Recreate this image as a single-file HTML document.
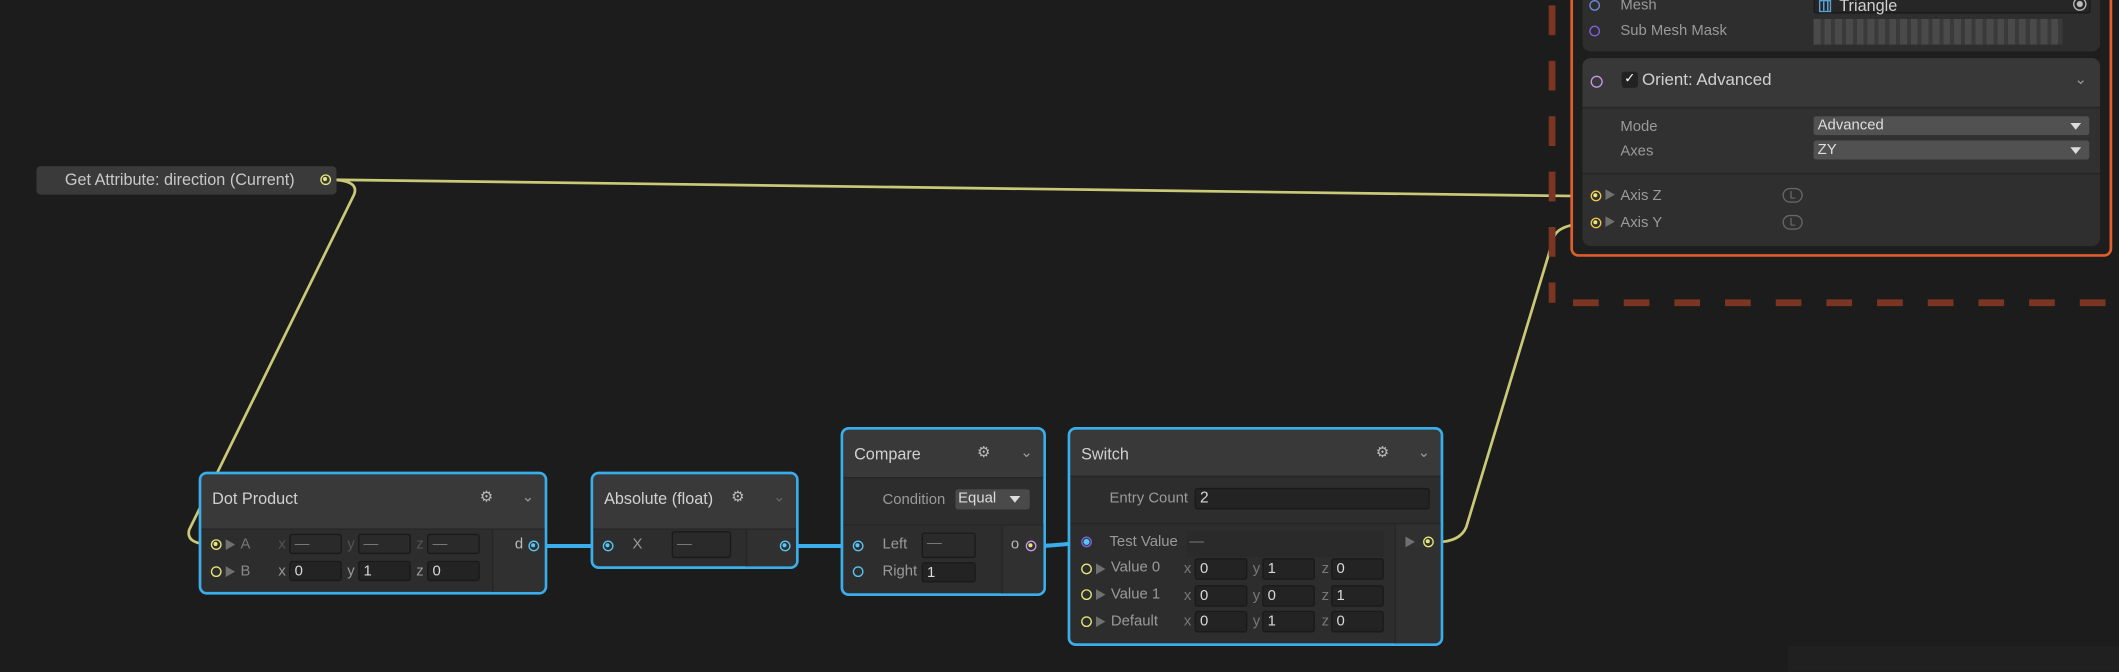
<!DOCTYPE html>
<html><head><meta charset="utf-8"><style>
*{box-sizing:border-box;margin:0;padding:0}
html,body{width:2119px;height:671px;overflow:hidden;background:#1c1c1c}
#s{position:absolute;left:0;top:0;width:1568px;height:497px;transform:scale(1.35140);transform-origin:0 0;font-family:"Liberation Sans",sans-serif;color:#c4c4c4;font-size:11px}
.a{position:absolute}
.node{position:absolute;border:2px solid #3aaeeb;border-radius:6px;background:#2d2d2d;overflow:hidden}
.hd{position:absolute;left:0;right:0;top:0;background:#393939;border-bottom:1px solid #262626}
.t{position:absolute;font-size:12px;color:#d0d0d0;white-space:nowrap}
.l{position:absolute;color:#9a9a9a;white-space:nowrap;font-size:11px}
.f{position:absolute;background:#232323;border:1px solid #1a1a1a;border-radius:2px;color:#d8d8d8;font-size:11px;padding-left:3px;line-height:14px;height:15px}
.fd{color:#777}
.p{position:absolute;width:8px;height:8px;border-radius:50%;border:1.5px solid #e6e67a}
.pb{border-color:#56c6f5}
.pf::after{content:"";position:absolute;left:1px;top:1px;width:3px;height:3px;border-radius:50%;background:#e6e67a}
.pb.pf::after{background:#56c6f5}
.tri{position:absolute;width:0;height:0;border-left:7px solid #707070;border-top:4.5px solid transparent;border-bottom:4.5px solid transparent}
.out{position:absolute;background:#303030;border-left:1px solid #262626}
</style></head><body><div id="s">

<svg class="a" style="left:0;top:0" width="1568" height="497">
<g fill="none" stroke="#c9c978" stroke-width="2">
<path d="M247 133 L1160 145 L1181 145"/>
<path d="M247 133 Q266 134 262 144 L140 392 Q137 403 158 403"/>
<path d="M1060 401 Q1080 402 1085 390 L1150 175 Q1154 165 1181 165"/>
</g>
<g fill="none" stroke="#3aaeeb" stroke-width="3">
<path d="M400 404 L450 404"/><path d="M585 404 L635 404"/><path d="M767 404 Q780 404 803 401"/>
</g>
<g stroke="#7a3622" stroke-width="5" fill="none">
<path d="M1148.5 4 V224" stroke-dasharray="22 19"/>
<path d="M1164 224 H1568" stroke-dasharray="19 18.5"/>
</g>
</svg>

<!-- get attribute -->
<div class="a" style="left:27px;top:123px;width:222px;height:21px;background:#3a3a3a;border-radius:3px"></div>
<div class="t" style="left:48px;top:126px;color:#c8c8c8">Get Attribute: direction (Current)</div>
<div class="p pf" style="left:237px;top:129px"></div>

<!-- orange panel -->
<div class="a" style="left:1162px;top:-10px;width:401px;height:200px;border:2px solid #de5e2c;border-radius:6px;background:#1e1e1e"></div>
<div class="a" style="left:1171px;top:-10px;width:383px;height:48px;background:#2e2e2e;border-radius:6px"></div>
<div class="a" style="left:1176px;top:0px;width:8px;height:8px;border-radius:50%;border:1.5px solid #6f8ad8"></div>
<div class="l" style="left:1199px;top:-2px">Mesh</div>
<div class="f" style="left:1342px;top:-4px;width:205px;height:14px;background:#262626;color:#d0d0d0;padding-left:18px;font-size:12px;line-height:14px">Triangle</div>
<div class="a" style="left:1346px;top:0px;width:9px;height:9px;border:1px solid #5aa0d8;background:repeating-linear-gradient(90deg,transparent 0 2px,#5aa0d8 2px 3px)"></div>
<div class="a" style="left:1534px;top:-2px;width:10px;height:10px;border:1.5px solid #bbb;border-radius:50%;background:radial-gradient(#bbb 0 2px,transparent 2.5px)"></div>
<div class="a" style="left:1176px;top:19px;width:8px;height:8px;border-radius:50%;border:1.5px solid #7d62e0"></div>
<div class="l" style="left:1199px;top:17px">Sub Mesh Mask</div>
<div class="a" style="left:1342px;top:14px;width:184px;height:19px;background:repeating-linear-gradient(90deg,#4a4a4a 0 5px,#3a3a3a 5px 8px)"></div>

<div class="a" style="left:1171px;top:43px;width:383px;height:139px;background:#2f2f2f;border-radius:6px;overflow:hidden">
 <div class="a" style="left:0;top:0;width:383px;height:37px;background:#383838;border-bottom:1px solid #262626"></div>
 <div class="a" style="left:0;top:38px;width:383px;height:48px;background:#313131;border-bottom:1px solid #262626"></div>
</div>
<div class="a" style="left:1177px;top:56px;width:9px;height:9px;border-radius:50%;border:1.5px solid #c49ae6"></div>
<div class="a" style="left:1200px;top:53px;width:12px;height:12px;background:#222;border-radius:2px;color:#fff;font-size:10px;line-height:12px;text-align:center">✓</div>
<div class="t" style="left:1215px;top:52px;font-size:12.5px">Orient: Advanced</div>
<div class="l" style="left:1535px;top:52px;color:#999">⌄</div>
<div class="l" style="left:1199px;top:88px">Mode</div>
<div class="a" style="left:1342px;top:86px;width:204px;height:14px;background:#515151;border-radius:2px;color:#ddd;padding-left:3px;line-height:14px">Advanced</div>
<div class="l" style="left:1199px;top:106px">Axes</div>
<div class="a" style="left:1342px;top:104px;width:204px;height:14px;background:#515151;border-radius:2px;color:#ddd;padding-left:3px;line-height:14px">ZY</div>
<div class="a" style="left:1532px;top:91px;border-top:5px solid #ddd;border-left:4.5px solid transparent;border-right:4.5px solid transparent"></div>
<div class="a" style="left:1532px;top:109px;border-top:5px solid #ddd;border-left:4.5px solid transparent;border-right:4.5px solid transparent"></div>
<div class="p pf" style="left:1177px;top:141px;border-color:#f2c64a"></div>
<div class="p pf" style="left:1177px;top:161px;border-color:#f2c64a"></div>
<div class="tri" style="left:1188px;top:140px"></div><div class="tri" style="left:1188px;top:160px"></div>
<div class="l" style="left:1199px;top:139px">Axis Z</div>
<div class="l" style="left:1199px;top:159px">Axis Y</div>
<div class="a" style="left:1319px;top:139px;width:15px;height:11px;border:1px solid #666;border-radius:6px;color:#777;font-size:8px;text-align:center;line-height:9px">L</div>
<div class="a" style="left:1319px;top:159px;width:15px;height:11px;border:1px solid #666;border-radius:6px;color:#777;font-size:8px;text-align:center;line-height:9px">L</div>

<!-- Dot Product -->
<div class="node" style="left:147px;top:349px;width:258px;height:91px">
 <div class="hd" style="height:41px"></div>
 <div class="out" style="left:215px;top:41px;width:45px;height:50px"></div>
</div>
<div class="t" style="left:157px;top:362px">Dot Product</div>
<div class="l" style="left:355px;top:361px;color:#bbb">⚙</div><div class="l" style="left:386px;top:361px;color:#999">⌄</div>
<div class="p pf" style="left:156px;top:399px"></div><div class="tri" style="left:167px;top:399px"></div>
<div class="p" style="left:156px;top:419px"></div><div class="tri" style="left:167px;top:419px"></div>
<div class="l" style="left:178px;top:397px;color:#777">A</div><div class="l" style="left:178px;top:417px;color:#888">B</div>
<div class="l" style="left:206px;top:397px;color:#555">x</div><div class="f fd" style="left:214px;top:395px;width:39px;background:#2a2a2a">—</div>
<div class="l" style="left:257px;top:397px;color:#555">y</div><div class="f fd" style="left:265px;top:395px;width:39px;background:#2a2a2a">—</div>
<div class="l" style="left:308px;top:397px;color:#555">z</div><div class="f fd" style="left:316px;top:395px;width:39px;background:#2a2a2a">—</div>
<div class="l" style="left:206px;top:417px">x</div><div class="f" style="left:214px;top:415px;width:39px">0</div>
<div class="l" style="left:257px;top:417px">y</div><div class="f" style="left:265px;top:415px;width:39px">1</div>
<div class="l" style="left:308px;top:417px">z</div><div class="f" style="left:316px;top:415px;width:39px">0</div>
<div class="l" style="left:381px;top:397px;color:#bbb">d</div>
<div class="p pb pf" style="left:391px;top:400px"></div>

<!-- Absolute -->
<div class="node" style="left:437px;top:349px;width:154px;height:72px">
 <div class="hd" style="height:41px"></div>
 <div class="out" style="left:113px;top:41px;width:40px;height:30px"></div>
</div>
<div class="t" style="left:447px;top:362px">Absolute (float)</div>
<div class="l" style="left:541px;top:361px;color:#bbb">⚙</div><div class="l" style="left:572px;top:361px;color:#666">⌄</div>
<div class="p pb pf" style="left:446px;top:400px"></div>
<div class="l" style="left:468px;top:397px">X</div>
<div class="f fd" style="left:497px;top:393px;width:44px;height:20px;background:#2a2a2a;line-height:18px">—</div>
<div class="p pb pf" style="left:577px;top:400px"></div>

<!-- Compare -->
<div class="node" style="left:622px;top:316px;width:152px;height:125px">
 <div class="hd" style="height:36px"></div>
 <div class="a" style="left:0;top:70px;width:152px;height:1px;background:#262626"></div>
 <div class="out" style="left:117px;top:71px;width:35px;height:60px"></div>
</div>
<div class="t" style="left:632px;top:329px">Compare</div>
<div class="l" style="left:723px;top:328px;color:#bbb">⚙</div><div class="l" style="left:755px;top:328px;color:#999">⌄</div>
<div class="l" style="left:653px;top:364px">Condition</div>
<div class="a" style="left:707px;top:362px;width:55px;height:15px;background:#4a4a4a;border-radius:2px;color:#ddd;padding-left:2px;line-height:15px">Equal</div>
<div class="a" style="left:747px;top:367px;border-top:5px solid #ddd;border-left:4px solid transparent;border-right:4px solid transparent"></div>
<div class="p pb pf" style="left:631px;top:400px"></div>
<div class="p pb" style="left:631px;top:419px"></div>
<div class="l" style="left:653px;top:397px">Left</div><div class="l" style="left:653px;top:417px">Right</div>
<div class="f fd" style="left:682px;top:394px;width:40px;height:19px;background:#2a2a2a">—</div>
<div class="f" style="left:682px;top:416px;width:40px">1</div>
<div class="l" style="left:748px;top:397px;color:#bbb">o</div>
<div class="p pf" style="left:759px;top:400px;border-color:#c49ae6"></div>

<!-- Switch -->
<div class="node" style="left:790px;top:316px;width:278px;height:162px">
 <div class="hd" style="height:35px"></div>
 <div class="a" style="left:0;top:69px;width:278px;height:1px;background:#262626"></div>
 <div class="out" style="left:240px;top:70px;width:38px;height:92px"></div>
</div>
<div class="t" style="left:800px;top:329px">Switch</div>
<div class="l" style="left:1018px;top:328px;color:#bbb">⚙</div><div class="l" style="left:1049px;top:328px;color:#999">⌄</div>
<div class="l" style="left:821px;top:363px">Entry Count</div>
<div class="f" style="left:884px;top:361px;width:174px;height:16px;font-size:11.5px">2</div>
<div class="a" style="left:800px;top:397px;width:8px;height:8px;border-radius:50%;border:1.5px solid #7d62e0;background:radial-gradient(#56c6f5 0 2px,transparent 2.5px)"></div>
<div class="l" style="left:821px;top:395px">Test Value</div>
<div class="a" style="left:878px;top:393px;width:146px;height:19px;background:#2a2a2a;color:#777;padding-left:2px;line-height:16px">—</div>
<div class="p" style="left:800px;top:417px"></div><div class="tri" style="left:811px;top:417px"></div><div class="l" style="left:822px;top:414px">Value 0</div>
<div class="p" style="left:800px;top:436px"></div><div class="tri" style="left:811px;top:436px"></div><div class="l" style="left:822px;top:434px">Value 1</div>
<div class="p" style="left:800px;top:456px"></div><div class="tri" style="left:811px;top:456px"></div><div class="l" style="left:822px;top:454px">Default</div>
<div class="l" style="left:876px;top:415px;color:#777">x</div><div class="f" style="left:884px;top:413px;width:39px;height:16px">0</div>
<div class="l" style="left:927px;top:415px;color:#777">y</div><div class="f" style="left:934px;top:413px;width:39px;height:16px">1</div>
<div class="l" style="left:978px;top:415px;color:#777">z</div><div class="f" style="left:985px;top:413px;width:39px;height:16px">0</div>
<div class="l" style="left:876px;top:435px;color:#777">x</div><div class="f" style="left:884px;top:433px;width:39px;height:16px">0</div>
<div class="l" style="left:927px;top:435px;color:#777">y</div><div class="f" style="left:934px;top:433px;width:39px;height:16px">0</div>
<div class="l" style="left:978px;top:435px;color:#777">z</div><div class="f" style="left:985px;top:433px;width:39px;height:16px">1</div>
<div class="l" style="left:876px;top:454px;color:#777">x</div><div class="f" style="left:884px;top:452px;width:39px;height:16px">0</div>
<div class="l" style="left:927px;top:454px;color:#777">y</div><div class="f" style="left:934px;top:452px;width:39px;height:16px">1</div>
<div class="l" style="left:978px;top:454px;color:#777">z</div><div class="f" style="left:985px;top:452px;width:39px;height:16px">0</div>
<div class="tri" style="left:1040px;top:397px"></div>
<div class="p pf" style="left:1053px;top:397px"></div>

<div class="a" style="left:1323px;top:478px;width:245px;height:19px;background:#202020"></div>
</div></body></html>
